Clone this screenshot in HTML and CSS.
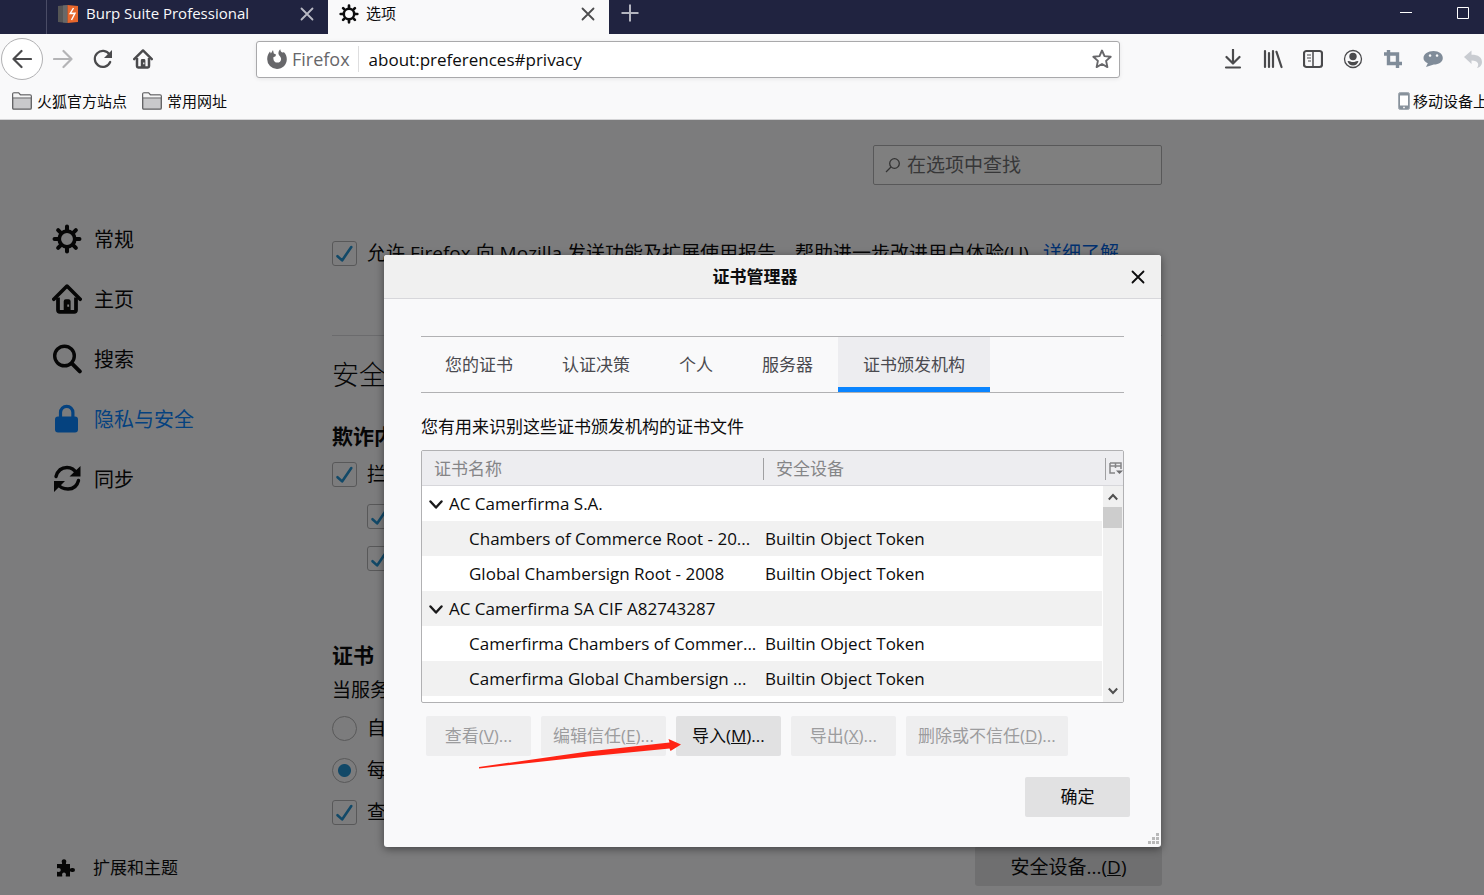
FILE: index.html
```
<!DOCTYPE html>
<html lang="zh-CN">
<head>
<meta charset="utf-8">
<title>选项</title>
<link rel="stylesheet" href="styles.css">
</head>
<body>
<svg class="defs" width="0" height="0" aria-hidden="true">
  <symbol id="gear" viewBox="0 0 20 20">
    <circle cx="10" cy="10" r="5.2" fill="none" stroke="currentColor" stroke-width="2.5"/>
    <path d="M10 1.7v2.500M10 15.800v2.500M1.700 10h2.500M15.800 10h2.500M4.100 4.100l1.800 1.800M14.100 14.100l1.800 1.800M4.100 15.900l1.800-1.800M14.100 5.900l1.800-1.800" stroke="currentColor" stroke-width="2.7" stroke-linecap="round"/>
  </symbol>
  <symbol id="home" viewBox="0 0 20 20">
    <path d="M1.200 10.200L10 1.400l8.800 8.800" fill="none" stroke="currentColor" stroke-width="2.4" stroke-linecap="round" stroke-linejoin="round"/>
    <path d="M4 9v8.300q0 1.200 1.200 1.200h9.600q1.200 0 1.200-1.200V9" fill="none" stroke="currentColor" stroke-width="2.5"/>
    <path fill-rule="evenodd" d="M7.800 18.500v-7q0-1.400 1.400-1.400h1.800q1.400 0 1.400 1.400v7zM10.200 13.600v1.600h1.200v-1.600z" fill="currentColor"/>
  </symbol>
  <symbol id="cross" viewBox="0 0 14 14"><path d="M1.500 1.500l11 11M12.500 1.500l-11 11" stroke="currentColor" stroke-width="1.8" stroke-linecap="round"/></symbol>
  <symbol id="tick" viewBox="0 0 25 25"><path d="M5.500 15.200l4.600 4.200L19.300 6" fill="none" stroke="currentColor" stroke-width="2.6" stroke-linecap="round" stroke-linejoin="round"/></symbol>
  <symbol id="folder" viewBox="0 0 20 18">
    <path d="M.7 16V2.200Q.7.8 2 .8h4.600L8.600 3H18q1.300 0 1.300 1.300V16q0 1.200-1.300 1.200H2Q.7 17.200.7 16z" fill="#c9c9cb" stroke="#5f5f61" stroke-width="1.3"/>
    <path d="M1.400 3V1.600h5L8 3.600h10.600v2H1.400z" fill="#f4f4f4"/><path d="M1 6h18" stroke="#6f6f71"/>
  </symbol>
</svg>

<header class="chrome">
  <div class="tabs">
    <div class="tab tab-first">
      <svg class="tab-icon" viewBox="0 0 20 18"><path d="M0 1L9.500 0v18L0 17z" fill="#555"/><path d="M5 .5L9.500 0v18L5 17.500z" fill="#686868"/><path d="M9.500 0L20 1v16L9.500 18z" fill="#e8672c"/><path d="M15.500 3l-3.300 5.500 4.800-.3-3.500 6.800" fill="none" stroke="#fff" stroke-width="1.400"/></svg>
      <span class="tab-label">Burp Suite Professional</span>
      <button class="tab-close" aria-label="关闭标签页"><svg><use href="#cross"/></svg></button>
    </div>
    <div class="tab tab-active">
      <svg class="tab-icon gear-icon"><use href="#gear"/></svg>
      <span class="tab-label">选项</span>
      <button class="tab-close" aria-label="关闭标签页"><svg><use href="#cross"/></svg></button>
    </div>
    <button class="new-tab" aria-label="新标签页"><svg viewBox="0 0 18 18"><path d="M9 .5v17M.5 9h17" stroke="currentColor" stroke-width="2"/></svg></button>
    <div class="window-buttons">
      <button aria-label="最小化"><svg viewBox="0 0 12 12"><path d="M0 5.500h12" stroke="#fff"/></svg></button>
      <button aria-label="最大化"><svg viewBox="0 0 12 12"><path d="M.5.5h11v11H.5z" fill="none" stroke="#fff"/></svg></button>
    </div>
  </div>

  <div class="navbar">
    <button class="back" aria-label="后退"><svg viewBox="0 0 20 20"><path d="M19 10H1.500M9.500 2L1.500 10l8 8" class="line"/></svg></button>
    <button class="tool faded" aria-label="前进"><svg viewBox="0 0 20 20"><path d="M1 10h17.500M10.500 2l8 8-8 8" class="line"/></svg></button>
    <button class="tool" aria-label="刷新"><svg viewBox="0 0 20 20"><path d="M16.500 5.500A8 8 0 1 0 17.200 13" class="line"/><path d="M19 1v8h-8z" fill="currentColor"/></svg></button>
    <button class="tool" aria-label="主页"><svg><use href="#home"/></svg></button>
    <div class="urlbar">
      <svg class="fox" viewBox="0 0 20 20"><path d="M10 20A9.800 9.800 0 0 1 .2 10C.2 6.800 1.500 4.500 3 2.500l.9 2L6 1l.8 3.600L9 5.500 8.500 7.200 6.400 8.300C6 12 8 13.600 10.300 13.600c2.600 0 4.200-2 3.700-4.300-.3-1.600-1.700-2.100-2.300-3.700C11 3.800 11.800 1.500 13.300.2c0 1.700.7 2.400 2 3.300L17 3.200C19 5.200 19.800 7.600 19.800 10.200 19.800 15.500 15.400 20 10 20z" fill="currentColor"/></svg>
      <span class="identity">Firefox</span>
      <input class="url" aria-label="地址" value="about:preferences#privacy">
      <svg class="star" viewBox="0 0 20 20"><path d="M10 1.500l2.500 5.600 6.200.7-4.600 4.100 1.300 6.200L10 15l-5.400 3.100 1.300-6.200L1.300 7.800l6.200-.7z" fill="none" stroke="currentColor" stroke-width="1.900" stroke-linejoin="round"/></svg>
    </div>
    <div class="tools">
      <button class="tool" aria-label="下载"><svg viewBox="0 0 20 20"><path d="M10 .8v13M3.500 8l6.500 6.500L16.500 8M3 18.500h14" class="line"/></svg></button>
      <button class="tool" aria-label="书库"><svg viewBox="0 0 20 20"><path d="M2 2v16M6 4v14M10 2v16M13.500 2.800L18.500 18" class="line"/></svg></button>
      <button class="tool" aria-label="侧栏"><svg viewBox="0 0 20 20"><rect x="1" y="2" width="18" height="16" rx="2.500" class="line"/><path d="M10 2v16" stroke="currentColor" stroke-width="1.500"/><path d="M4 6h4M4 9h4M5 12h3" stroke="currentColor" stroke-width="1.200"/></svg></button>
      <button class="tool" aria-label="帐户"><svg viewBox="0 0 20 20"><circle cx="10" cy="10" r="8.500" fill="none" stroke="currentColor" stroke-width="1.300"/><circle cx="10" cy="7.500" r="3.700" fill="currentColor"/><path d="M4.500 12.200q1.800-.5 3 .3 2.500 1 5 0 1.200-.8 3-.3-1.500 4.200-5.500 4.200t-5.500-4.200z" fill="currentColor"/></svg></button>
      <button class="tool slate" aria-label="截图"><svg viewBox="0 0 20 20"><path d="M1 5h13.500v14M5.500 1v13.500H19" fill="none" stroke="currentColor" stroke-width="3.400"/></svg></button>
      <button class="tool slate" aria-label="聊天"><svg viewBox="0 0 20 20"><path fill-rule="evenodd" d="M10.500 2C16 2 19.800 5 19.800 9s-3.800 6.500-9 6.500L3 18l1.800-3.800C2 13 .5 11.500.5 9 .5 5 5 2 10.500 2zM7 5.200a1.300 1.300 0 1 0 .1 0zm7 0a1.300 1.300 0 1 0 .1 0z" fill="currentColor"/></svg></button>
      <button class="tool pale" aria-label="撤销"><svg viewBox="0 0 20 20"><path d="M1 8L8.500 1.500v4.200c7 0 10.500 2.600 10.500 7.300 0 3-2 5.500-5 6 2.500-3.500 1.500-7.500-5.500-7.500v3.500z" fill="currentColor"/></svg></button>
    </div>
  </div>

  <nav class="bookmarks">
    <a href="#"><svg class="folder"><use href="#folder"/></svg>火狐官方站点</a>
    <a href="#"><svg class="folder"><use href="#folder"/></svg>常用网址</a>
    <a href="#" class="mobile"><svg class="phone" viewBox="0 0 12 18"><rect x=".5" y=".5" width="11" height="17" rx="1.800" fill="#87919b" stroke="#a3abb3"/><path d="M2 3.500h8v10H2z" fill="#fff"/><path d="M5 15.500h2" stroke="#e8e8e8" stroke-width="1.500"/></svg>移动设备上</a>
  </nav>
</header>

<div class="page">
  <aside class="sidebar">
    <a href="#"><svg class="cat"><use href="#gear"/></svg>常规</a>
    <a href="#"><svg class="cat"><use href="#home"/></svg>主页</a>
    <a href="#"><svg class="cat" viewBox="0 0 30 30"><circle cx="12.500" cy="12" r="9.800" fill="none" stroke="currentColor" stroke-width="3.400"/><path d="M19.800 19.300l8 8" stroke="currentColor" stroke-width="4" stroke-linecap="round"/></svg>搜索</a>
    <a href="#" class="current"><svg class="cat" viewBox="0 0 30 30"><path d="M8.500 14V8.500a6.200 6.200 0 0 1 12.400 0V14" fill="none" stroke="currentColor" stroke-width="3.200"/><rect x="3" y="12.500" width="23" height="16" rx="3" fill="currentColor"/></svg>隐私与安全</a>
    <a href="#"><svg class="cat" viewBox="0 0 30 30"><path d="M4 12.500C6 5.500 10 3.500 15 3.500c4.500 0 7.500 2 9.500 6M26.500 16.500C25 22.500 21 25 16 25c-5 0-8.500-2-10.500-5.500" fill="none" stroke="currentColor" stroke-width="3.400" stroke-linecap="round"/><path d="M28.500 2v10.500H17.500zM2 28V17h11z" fill="currentColor"/></svg>同步</a>
    <a href="#" class="addons"><svg class="puzzle" viewBox="0 0 18 18"><path d="M0 5h5q.4-.8-.3-1.900Q4.500.3 7 .3t2.300 2.800Q8.700 4.200 9 5h4v4.500q1 .3 1.800-.4Q18 8.600 18 11t-3.200 1.900q-.8-.7-1.800-.4V17.500H8.800q-.3-1 .2-1.800Q8.800 13.500 7 13.500t-2 2.200q.5.800.2 1.800H0v-4.700q.9-.3 1.600.2 2.200 0 2.200-2t-2.200-2Q.9 9.500 0 9.200z" fill="currentColor"/></svg>扩展和主题</a>
  </aside>
  <main class="prefs">
    <label class="search"><svg viewBox="0 0 16 16"><circle cx="9.500" cy="6.500" r="4.800" fill="none" stroke="currentColor" stroke-width="1.300"/><path d="M6 10l-5 5" stroke="currentColor" stroke-width="1.300"/></svg><input type="search" placeholder="在选项中查找" aria-label="在选项中查找"></label>
    <div class="row row-report"><label class="opt"><span class="mark"><input type="checkbox" checked><svg><use href="#tick"/></svg></span>允许 Firefox 向 Mozilla 发送功能及扩展使用报告，帮助进一步改进用户体验(U)</label><a href="#">详细了解</a></div>
    <hr>
    <h1>安全</h1>
    <h2 class="h-fraud">欺诈内</h2>
    <label class="opt opt-block"><span class="mark"><input type="checkbox" checked><svg><use href="#tick"/></svg></span>拦</label>
    <label class="opt opt-sub"><span class="mark"><input type="checkbox" checked aria-label="下载"><svg><use href="#tick"/></svg></span></label>
    <label class="opt opt-sub"><span class="mark"><input type="checkbox" checked aria-label="软件"><svg><use href="#tick"/></svg></span></label>
    <h2 class="h-cert">证书</h2>
    <p>当服务</p>
    <label class="opt opt-radio"><span class="mark"><input type="radio" name="cert"></span>自</label>
    <label class="opt"><span class="mark"><input type="radio" name="cert" checked></span>每</label>
    <label class="opt"><span class="mark"><input type="checkbox" checked><svg><use href="#tick"/></svg></span>查</label>
    <button class="devices">安全设备...(<u>D</u>)</button>
  </main>

  <div class="overlay">
    <section class="dialog" role="dialog" aria-labelledby="dlg-title">
      <div class="dialog-head"><h3 id="dlg-title">证书管理器</h3><button aria-label="关闭"><svg><use href="#cross"/></svg></button></div>
      <div class="dialog-body">
        <div class="cert-tabs" role="tablist">
          <button role="tab">您的证书</button><button role="tab">认证决策</button><button role="tab">个人</button><button role="tab">服务器</button><button role="tab" aria-selected="true" class="selected">证书颁发机构</button>
        </div>
        <p class="desc">您有用来识别这些证书颁发机构的证书文件</p>
        <div class="tree">
          <table>
            <colgroup><col class="col-name"><col><col class="col-pick"></colgroup>
            <thead><tr><th>证书名称</th><th><span class="divided">安全设备</span></th><th><span class="picker"><svg viewBox="0 0 14 13"><path d="M1 1h11v6M1 1v10h5M1 4h11M6.500 1v5" fill="none" stroke="#858587" stroke-width="1.500"/><path d="M7 8.500h7l-3.500 3.500z" fill="#6e6e70"/></svg></span></th></tr></thead>
            <tbody>
              <tr><td class="group"><svg viewBox="0 0 14 10"><path d="M1.500 1.500L7 7.500l5.500-6" class="chev"/></svg>AC Camerfirma S.A.</td><td></td><td></td></tr>
              <tr><td class="leaf">Chambers of Commerce Root - 20...</td><td>Builtin Object Token</td><td></td></tr>
              <tr><td class="leaf">Global Chambersign Root - 2008</td><td>Builtin Object Token</td><td></td></tr>
              <tr><td class="group"><svg viewBox="0 0 14 10"><path d="M1.500 1.500L7 7.500l5.500-6" class="chev"/></svg>AC Camerfirma SA CIF A82743287</td><td></td><td></td></tr>
              <tr><td class="leaf">Camerfirma Chambers of Commer...</td><td>Builtin Object Token</td><td></td></tr>
              <tr><td class="leaf">Camerfirma Global Chambersign ...</td><td>Builtin Object Token</td><td></td></tr>
            </tbody>
          </table>
          <div class="scrollbar"><svg viewBox="0 0 10 8"><path d="M.8 6.500L5 2l4.200 4.500"/></svg><span class="thumb"></span><svg class="down" viewBox="0 0 10 8"><path d="M.8 1.500L5 6l4.200-4.500"/></svg></div>
        </div>
        <div class="actions">
          <button disabled>查看(<u>V</u>)...</button><button disabled>编辑信任(<u>E</u>)...</button><button>导入(<u>M</u>)...</button><button disabled>导出(<u>X</u>)...</button><button disabled>删除或不信任(<u>D</u>)...</button>
        </div>
        <div class="confirm"><button>确定</button></div>
      </div>
      <svg class="arrow" viewBox="0 0 204 32"><path d="M1 29L110 13.500 191.500 4.500 190.500 1 203 6.500 192.500 13 191.500 10.500 110 18.500 1 30.500z" fill="#ff2314"/></svg>
      <svg class="grip" viewBox="0 0 11 11"><path d="M8 0h3v3H8zM4 4h3v3H4zM8 4h3v3H8zM0 8h3v3H0zM4 8h3v3H4zM8 8h3v3H8z" fill="#b9b9b9"/></svg>
    </section>
  </div>
</div>
</body>
</html>
```
FILE: styles.css
```
* { box-sizing: border-box; }
body {
  margin: 0;
  min-height: 100vh;
  display: flex;
  flex-direction: column;
  overflow: hidden;
  font-family: "Open Sans", "Noto Sans CJK SC", sans-serif;
  font-size: 17px;
  color: #0c0c0d;
  background: #f9f9fa;
}
button, input { font: inherit; color: inherit; }
button { border: 0; padding: 0; background: none; }
a { color: inherit; text-decoration: none; }
h1, h2, h3, p, hr { margin: 0; }
svg { flex: none; display: block; }
.defs { position: absolute; }

/* Browser chrome */
.chrome { background: #f9f9fa; border-bottom: 1px solid #d4d4d6; overflow: hidden; }
.tabs { display: flex; height: 34px; background: #202340; color: #f9f9fa; font-size: 15px; padding-left: 46px; }
.tab { display: flex; align-items: center; width: 282px; padding: 0 14px 6px 11px; }
.tab-first { border-left: 1px solid #4a4c66; }
.tab-active { width: 281px; background: #f9f9fa; color: #0c0c0d; }
.tab-icon { width: 20px; height: 18px; margin-right: 8px; }
.gear-icon { height: 20px; margin-right: 7px; }
.tab-label { flex: 1; padding-bottom: 2px; line-height: 20px; white-space: nowrap; }
.tab-close svg { width: 14px; height: 14px; }
.tab-close { color: #b9bac4; }
.tab-active .tab-close { color: #4c4c4e; }
.new-tab { padding: 0 12px 8px; color: #b4b5c0; }
.new-tab svg { width: 18px; height: 18px; }
.window-buttons { display: flex; margin-left: auto; gap: 45px; padding: 0 15px 8px 0; align-items: center; }
.window-buttons svg { width: 12px; height: 12px; }

.navbar { display: flex; align-items: center; height: 50px; padding-left: 1px; color: #4a4a4c; }
.back { display: grid; place-items: center; width: 42px; height: 42px; border: 1px solid #b1b1b3; border-radius: 50%; background: #fff; }
.back svg, .tool svg { width: 20px; height: 20px; }
.line { fill: none; stroke: currentColor; stroke-width: 2.2; stroke-linecap: round; stroke-linejoin: round; }
.tool { display: grid; place-items: center; width: 40px; height: 40px; }
.faded { color: #b4b4b6; }
.slate { color: #808c99; }
.pale { color: #c9ccd1; }
.tools { display: flex; margin-right: -9px; }
.urlbar { flex: 1; display: flex; align-items: center; height: 37px; margin: 0 93px; padding: 0 7px 0 10px; border: 1px solid #a9a9ab; border-radius: 3px; background: #fff; box-shadow: 0 1px 4px rgba(0,0,0,.08); color: #67676a; }
.fox, .star { width: 20px; height: 20px; }
.identity { padding: 0 8px 0 5px; border-right: 1px solid #dededf; line-height: 26px; font-size: 18px; }
.url { flex: 1; min-width: 0; border: 0; padding: 0 10px; background: none; color: #0c0c0d; outline: 0; }

.bookmarks { display: flex; height: 35px; align-items: center; gap: 15px; padding: 0 0 2px 12px; font-size: 15px; white-space: nowrap; }
.bookmarks a { display: flex; align-items: center; }
.folder { width: 20px; height: 18px; margin-right: 5px; }
.phone { width: 12px; height: 18px; margin-right: 3px; }
.mobile { margin-left: auto; margin-right: -4px; }

/* Preferences page */
.page { position: relative; flex: 1; display: flex; font-size: 19px; }
.sidebar { display: flex; flex-direction: column; width: 332px; padding: 90px 0 7px 52px; font-size: 20px; }
.sidebar a { display: flex; align-items: center; gap: 12px; height: 60px; line-height: 28px; }
.cat { width: 30px; height: 30px; margin-bottom: 3px; }
.sidebar .current { color: #0a84ff; }
.sidebar .addons { margin-top: auto; height: 40px; padding-left: 5px; gap: 18px; font-size: 17px; }
.puzzle { width: 18px; height: 18px; }
.prefs { display: flex; flex-direction: column; width: 830px; padding-top: 25px; }
.search { display: flex; align-items: center; gap: 6px; align-self: flex-end; width: 289px; height: 40px; padding: 0 11px; border: 1px solid #b1b1b3; border-radius: 2px; background: #fff; color: #666; }
.search svg { width: 16px; height: 16px; }
.search input { flex: 1; min-width: 0; padding: 0; border: 0; background: none; outline: 0; }
.search input::placeholder { color: #6f6f71; opacity: 1; }
.row { display: flex; gap: 14px; line-height: 26px; white-space: nowrap; }
.row-report { margin-top: 55px; }
.row a { color: #0060df; }
.prefs hr { width: 100%; margin-top: 69px; border: 0; border-top: 1px solid #d7d7db; }
.prefs h1 { margin-top: 21px; font-size: 27px; line-height: 36px; font-weight: 300; }
.prefs h2 { font-size: 21px; line-height: 30px; font-weight: 700; }
.prefs .h-fraud { margin-top: 28px; }
.prefs .h-cert { margin-top: 69px; }
.prefs p { margin-top: 7px; line-height: 26px; }
.opt { display: flex; align-items: center; gap: 10px; height: 26px; margin-top: 16px; line-height: 26px; }
.row .opt { margin-top: 0; }
.prefs .opt-block { margin-top: 10px; }
.opt-sub { padding-left: 35px; }
.prefs .opt-radio { margin-top: 12px; }
.mark { display: grid; width: 25px; height: 25px; }
.mark > * { grid-area: 1 / 1; width: 25px; height: 25px; margin: 0; }
.mark svg { color: #2492d1; }
.mark input { appearance: none; border: 1px solid #b1b1b3; border-radius: 3px; }
.mark input[type="radio"] { border-radius: 50%; }
.mark input[type="radio"]:checked { background: radial-gradient(circle, #2492d1 6px, transparent 7px); }
.devices { align-self: flex-end; margin-top: 21px; width: 187px; height: 40px; border-radius: 3px; background: #dedee0; }

/* Modal */
.overlay { position: absolute; inset: 0; display: flex; justify-content: center; align-items: flex-start; padding: 135px 0 0 61px; background: rgba(0,0,0,.5); font-size: 17px; }
.dialog { position: relative; width: 777px; border-radius: 3px; background: #f9f9fa; box-shadow: 0 2px 8px rgba(0,0,0,.45); }
.dialog-head { display: flex; align-items: center; height: 44px; padding: 0 16px 0 0; border-bottom: 1px solid #d7d7db; border-radius: 3px 3px 0 0; background: #f0f0f0; }
.dialog-head h3 { flex: 1; padding-right: 5px; font-size: 17px; line-height: 24px; font-weight: 700; text-align: center; }
.dialog-head svg { width: 14px; height: 14px; }
.dialog-body { padding: 37px 37px 30px; }
.cert-tabs { display: flex; height: 57px; border: solid #b1b1b3; border-width: 1px 0; color: #4a4a4f; }
.cert-tabs button { padding: 3px 25px 0 24px; border-bottom: 5px solid transparent; }
.cert-tabs .selected { padding-left: 25px; border-color: #0a84ff; background: #ededf0; }
.desc { margin: 21px 0 10px; line-height: 26px; }
.tree { position: relative; height: 253px; border: 1px solid #b1b1b3; border-radius: 2px; overflow: hidden; background: #fff; }
.tree table { width: 100%; table-layout: fixed; border-collapse: collapse; line-height: 24px; }
.col-name { width: 341px; }
.col-pick { width: 18px; }
.tree tr { height: 35px; }
.tree th { padding: 0; background: #ededf0; color: #858587; font-weight: 400; text-align: left; box-shadow: inset 0 -1px #d7d7db; }
.tree th:first-child { padding-left: 12px; }
.divided { display: block; padding-left: 12px; border-left: 1px solid #a0a0a2; line-height: 22px; }
.picker { display: flex; align-items: center; height: 22px; padding-left: 3px; border-left: 1px solid #a0a0a2; }
.picker svg { width: 14px; height: 13px; }
.tree td { padding: 0 0 0 2px; white-space: nowrap; }
.tree tbody tr:nth-child(even) { background: #f1f1f1; }
.tree .leaf { padding-left: 47px; }
.tree .group { padding-left: 7px; }
.group svg { display: inline-block; width: 14px; height: 10px; margin-right: 6px; }
.chev { fill: none; stroke: #1a1a1b; stroke-width: 2.4; stroke-linecap: round; stroke-linejoin: round; }
.scrollbar { position: absolute; top: 35px; right: 0; bottom: 0; width: 21px; display: flex; flex-direction: column; align-items: center; padding: 7px 1px 7px 0; border-left: 1px solid #fff; background: #f0f0f0; }
.scrollbar svg { width: 10px; height: 8px; fill: none; stroke: #505050; stroke-width: 2; }
.thumb { width: 19px; height: 21px; margin-top: 6px; background: #cdcdcd; }
.scrollbar .down { margin-top: auto; }
.actions { display: flex; gap: 10px; margin-top: 13px; padding-left: 5px; }
.actions button, .confirm button { min-width: 105px; height: 40px; padding: 0 12px 3px; border-radius: 2px; background: #e1e1e2; white-space: nowrap; }
.actions button:disabled { background: #eeeeef; color: #9c9c9e; }
.confirm { display: flex; justify-content: flex-end; margin: 21px -6px 0 0; }
.arrow { position: absolute; left: 94px; top: 483px; width: 204px; height: 32px; }
.grip { position: absolute; right: 2px; bottom: 3px; width: 11px; height: 11px; }
```
